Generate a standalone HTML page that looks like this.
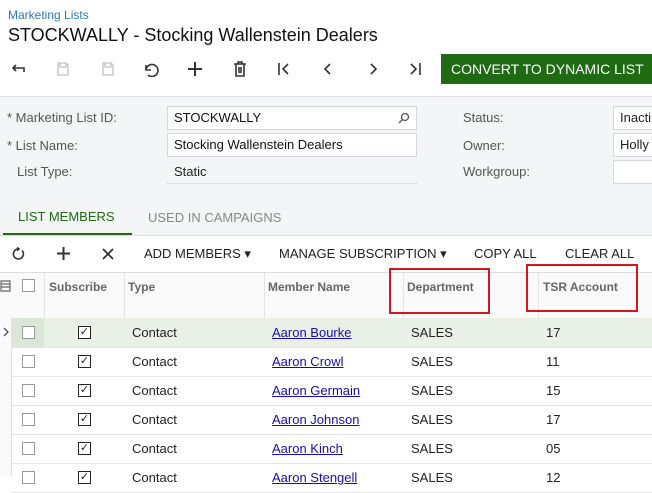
<!DOCTYPE html><html><head><style>
body{margin:0;width:652px;height:476px;overflow:hidden;font-family:"Liberation Sans",sans-serif;background:#fff;position:relative;color:#222}
.a{position:absolute;white-space:nowrap}
svg.i{position:absolute;fill:none;stroke:#333;stroke-width:1.6}
.inp{position:absolute;background:#fff;border:1px solid #d3d6da;height:24px;font-size:13px;line-height:22px;padding-left:6px;box-sizing:border-box}
.lbl{position:absolute;font-size:13px;color:#555}
.cb{position:absolute;width:11px;height:11px;border:1px solid #999;background:#fff}
.ck{position:absolute;width:11px;height:11px;border:1px solid #222;background:#fff;font-size:11px;line-height:11px;text-align:center}
.row{position:absolute;left:11px;width:641px;height:29px;border-bottom:1px solid #e6e6e6;font-size:13px}
.hd{position:absolute;top:280px;font-size:12px;color:#666;font-weight:bold}
</style></head><body>
<div class="a" style="left:8px;top:8px;font-size:12px;color:#2a7ab8">Marketing Lists</div>
<div class="a" style="left:8px;top:25px;font-size:18px;color:#111">STOCKWALLY - Stocking Wallenstein Dealers</div>
<svg class="i" style="left:10px;top:61px" width="16" height="16"><path d="M14 11V7H3M6 4L3 7l3 3"/></svg>
<svg class="i" style="left:55px;top:61px;stroke:#ccc" width="16" height="16"><path d="M3 2h8l2 2v10H3z M5 2v4h6V2"/></svg>
<svg class="i" style="left:100px;top:61px;stroke:#ccc" width="16" height="16"><path d="M3 2h8l2 2v10H3z M5 2v4h6V2"/></svg>
<svg class="i" style="left:143px;top:61px" width="16" height="16"><path d="M3 4v5h5M3 9a6 6 0 1 1 2 5"/></svg>
<svg class="i" style="left:186px;top:60px;stroke-width:2" width="18" height="18"><path d="M9 2v14M2 9h14"/></svg>
<svg class="i" style="left:232px;top:60px" width="16" height="18"><path d="M2 4h12M6 4V2h4v2M4 4v12h8V4M7 7v6M9 7v6"/></svg>
<svg class="i" style="left:276px;top:61px" width="16" height="16"><path d="M3 2v12M12 3L7 8l5 5"/></svg>
<svg class="i" style="left:320px;top:61px" width="16" height="16"><path d="M10 3L5 8l5 5"/></svg>
<svg class="i" style="left:365px;top:61px" width="16" height="16"><path d="M6 3l5 5-5 5"/></svg>
<svg class="i" style="left:407px;top:61px" width="16" height="16"><path d="M13 2v12M4 3l5 5-5 5"/></svg>
<div class="a" style="left:441px;top:54px;width:211px;height:30px;background:#1e6b14;color:#fff;font-size:14px;line-height:30px;padding-left:10px;box-sizing:border-box">CONVERT TO DYNAMIC LIST</div>
<div class="a" style="left:0;top:96px;width:652px;height:139px;background:#f4f5f6;border-top:1px solid #ddd"></div>
<div class="lbl" style="left:7px;top:110px">* Marketing List ID:</div>
<div class="lbl" style="left:7px;top:138px">* List Name:</div>
<div class="lbl" style="left:17px;top:164px">List Type:</div>
<div class="inp" style="left:167px;top:106px;width:250px;color:#111">STOCKWALLY<svg class="i" style="right:6px;top:5px;stroke:#555;stroke-width:1.3" width="12" height="12"><circle cx="7" cy="5" r="3.5"/><path d="M4.5 7.5L1 11"/></svg></div>
<div class="inp" style="left:167px;top:133px;width:250px;color:#111">Stocking Wallenstein Dealers</div>
<div class="a" style="left:174px;top:164px;font-size:13px">Static</div>
<div class="a" style="left:167px;top:183px;width:250px;border-top:1px dotted #ccc"></div>
<div class="lbl" style="left:463px;top:110px">Status:</div>
<div class="lbl" style="left:463px;top:138px">Owner:</div>
<div class="lbl" style="left:463px;top:164px">Workgroup:</div>
<div class="inp" style="left:613px;top:106px;width:50px">Inacti</div>
<div class="inp" style="left:613px;top:133px;width:50px">Holly</div>
<div class="inp" style="left:613px;top:160px;width:50px"></div>
<div class="a" style="left:18px;top:209px;font-size:13px;color:#1e6b14">LIST MEMBERS</div>
<div class="a" style="left:148px;top:210px;font-size:13px;color:#888">USED IN CAMPAIGNS</div>
<div class="a" style="left:3px;top:233px;width:129px;height:3px;background:#1e6b14"></div>
<div class="a" style="left:0;top:235px;width:652px;border-top:1px solid #ddd"></div>
<svg class="i" style="left:11px;top:246px" width="15" height="15"><path d="M6 1.5l2 1.5-2 1.5M7 3a5 5 0 1 0 4 1.5"/></svg>
<svg class="i" style="left:55px;top:245px;stroke-width:2" width="17" height="17"><path d="M8.5 2v13M2 8.5h13"/></svg>
<svg class="i" style="left:101px;top:247px;stroke-width:1.8" width="14" height="14"><path d="M2 2l10 10M12 2L2 12"/></svg>
<div class="a" style="left:144px;top:246px;font-size:13px">ADD MEMBERS ▾</div>
<div class="a" style="left:279px;top:246px;font-size:13px">MANAGE SUBSCRIPTION ▾</div>
<div class="a" style="left:474px;top:246px;font-size:13px">COPY ALL</div>
<div class="a" style="left:565px;top:246px;font-size:13px">CLEAR ALL</div>
<div class="a" style="left:0;top:272px;width:652px;height:46px;border-top:1px solid #ddd;border-bottom:1px solid #ddd;background:#fafafa"></div>
<svg class="i" style="left:0;top:280px;stroke:#666;stroke-width:1.2" width="11" height="12"><path d="M1 1h9v10H1zM1 4h9M1 7h9"/></svg>
<div class="cb" style="left:22px;top:279px"></div>
<div class="hd" style="left:49px">Subscribe</div>
<div class="hd" style="left:128px">Type</div>
<div class="hd" style="left:268px">Member Name</div>
<div class="hd" style="left:407px">Department</div>
<div class="hd" style="left:543px">TSR Account</div>
<div class="a" style="left:44px;top:273px;height:45px;border-left:1px solid #e3e3e3"></div>
<div class="a" style="left:124px;top:273px;height:45px;border-left:1px solid #e3e3e3"></div>
<div class="a" style="left:264px;top:273px;height:45px;border-left:1px solid #e3e3e3"></div>
<div class="a" style="left:403px;top:273px;height:45px;border-left:1px solid #e3e3e3"></div>
<div class="a" style="left:538px;top:273px;height:45px;border-left:1px solid #e3e3e3"></div>
<div class="a" style="left:389px;top:268px;width:97px;height:42px;border:2px solid #d8141c"></div>
<div class="a" style="left:526px;top:264px;width:108px;height:44px;border:2px solid #d8141c"></div>
<div class="a" style="left:0;top:318px;width:11px;height:158px;background:#fafafa;border-right:1px solid #ddd"></div>
<svg class="i" style="left:2px;top:326px;stroke:#555;stroke-width:1.3" width="8" height="12"><path d="M2 2l4 4-4 4"/></svg>
<div class="row" style="top:318px;background:#e9f1e7"></div>
<div class="row" style="top:347px"></div><div class="row" style="top:376px"></div><div class="row" style="top:405px"></div><div class="row" style="top:434px"></div><div class="row" style="top:463px"></div>
<div class="a" style="left:11px;top:318px;width:33px;height:29px;background:#dbe6d8"></div>
<div class="cb" style="left:22px;top:326px"></div><div class="ck" style="left:78px;top:326px">✓</div><div class="a" style="left:132px;top:325px;font-size:13px">Contact</div><div class="a" style="left:272px;top:325px;font-size:13px;color:#1a0dab;text-decoration:underline">Aaron Bourke</div><div class="a" style="left:411px;top:325px;font-size:13px">SALES</div><div class="a" style="left:546px;top:325px;font-size:13px">17</div>
<div class="cb" style="left:22px;top:355px"></div><div class="ck" style="left:78px;top:355px">✓</div><div class="a" style="left:132px;top:354px;font-size:13px">Contact</div><div class="a" style="left:272px;top:354px;font-size:13px;color:#1a0dab;text-decoration:underline">Aaron Crowl</div><div class="a" style="left:411px;top:354px;font-size:13px">SALES</div><div class="a" style="left:546px;top:354px;font-size:13px">11</div>
<div class="cb" style="left:22px;top:384px"></div><div class="ck" style="left:78px;top:384px">✓</div><div class="a" style="left:132px;top:383px;font-size:13px">Contact</div><div class="a" style="left:272px;top:383px;font-size:13px;color:#1a0dab;text-decoration:underline">Aaron Germain</div><div class="a" style="left:411px;top:383px;font-size:13px">SALES</div><div class="a" style="left:546px;top:383px;font-size:13px">15</div>
<div class="cb" style="left:22px;top:413px"></div><div class="ck" style="left:78px;top:413px">✓</div><div class="a" style="left:132px;top:412px;font-size:13px">Contact</div><div class="a" style="left:272px;top:412px;font-size:13px;color:#1a0dab;text-decoration:underline">Aaron Johnson</div><div class="a" style="left:411px;top:412px;font-size:13px">SALES</div><div class="a" style="left:546px;top:412px;font-size:13px">17</div>
<div class="cb" style="left:22px;top:442px"></div><div class="ck" style="left:78px;top:442px">✓</div><div class="a" style="left:132px;top:441px;font-size:13px">Contact</div><div class="a" style="left:272px;top:441px;font-size:13px;color:#1a0dab;text-decoration:underline">Aaron Kinch</div><div class="a" style="left:411px;top:441px;font-size:13px">SALES</div><div class="a" style="left:546px;top:441px;font-size:13px">05</div>
<div class="cb" style="left:22px;top:471px"></div><div class="ck" style="left:78px;top:471px">✓</div><div class="a" style="left:132px;top:470px;font-size:13px">Contact</div><div class="a" style="left:272px;top:470px;font-size:13px;color:#1a0dab;text-decoration:underline">Aaron Stengell</div><div class="a" style="left:411px;top:470px;font-size:13px">SALES</div><div class="a" style="left:546px;top:470px;font-size:13px">12</div>
</body></html>
